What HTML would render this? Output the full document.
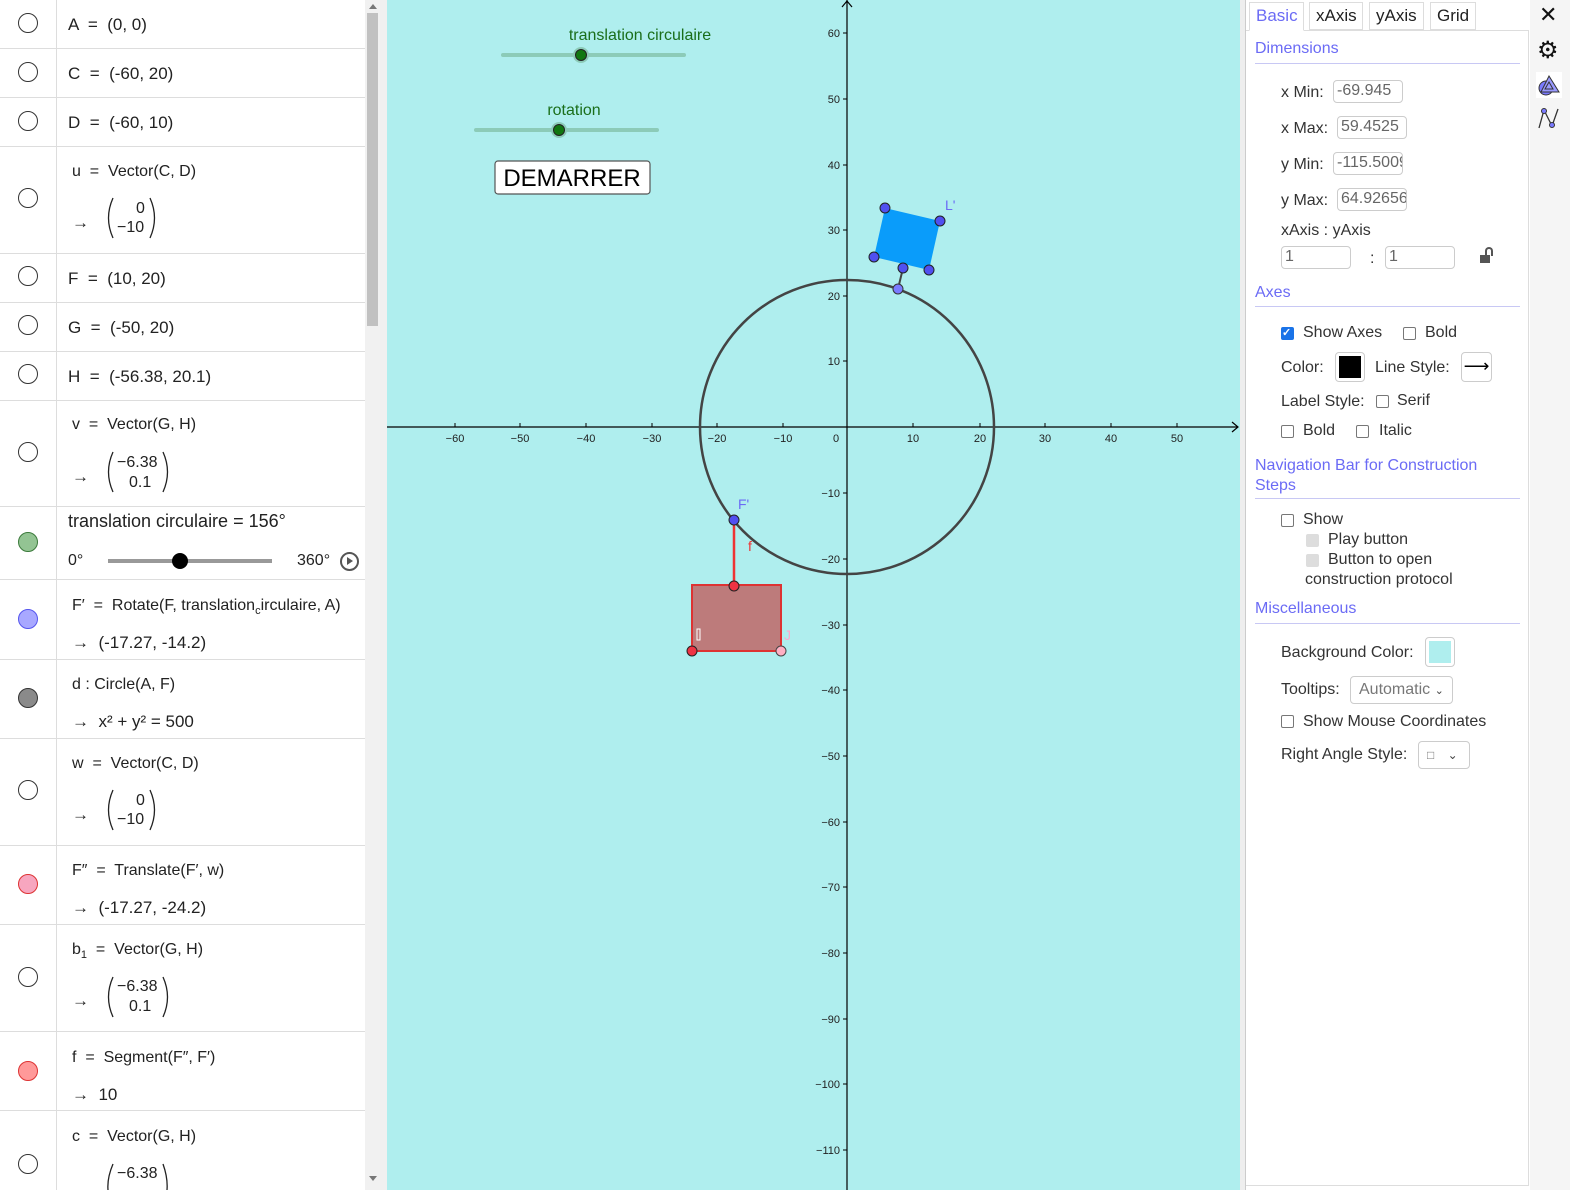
<!DOCTYPE html>
<html><head><meta charset="utf-8"><style>
*{margin:0;padding:0;box-sizing:border-box}
body{width:1570px;height:1190px;overflow:hidden;background:#fff;font-family:"Liberation Sans",sans-serif;position:relative}
.a{position:absolute;white-space:nowrap}
.row{position:absolute;left:0;width:365px;border-bottom:1px solid #ddd}
.ic{position:absolute;left:18px;width:20px;height:20px;border-radius:50%;border:1.5px solid #333;background:#fff}
.t{position:absolute;font-size:17px;color:#222;white-space:nowrap;line-height:20px}
.rp{font-size:16px;color:#333}
.blue{color:#6b6bf5}
.inp{position:absolute;border:1px solid #ccc;border-radius:4px;height:23px;font-size:16px;color:#666;padding:1px 3px;overflow:hidden;background:#fff;white-space:nowrap}
.cb{position:absolute;width:13px;height:13px;border:1px solid #777;border-radius:2px;background:#fff}
.hr{position:absolute;left:1255px;width:265px;height:1px;background:#c8c8f4}
</style></head><body>

<!-- left panel -->
<div class="a" style="left:0;top:0;width:365px;height:1190px;background:#fff"></div>
<div class="a" style="left:56px;top:0;width:1px;height:1190px;background:#ddd"></div>
<div class="row" style="top:0;height:49px"></div>
<div class="row" style="top:49px;height:49px"></div>
<div class="row" style="top:98px;height:49px"></div>
<div class="row" style="top:147px;height:107px"></div>
<div class="row" style="top:254px;height:49px"></div>
<div class="row" style="top:303px;height:49px"></div>
<div class="row" style="top:352px;height:49px"></div>
<div class="row" style="top:401px;height:106px"></div>
<div class="row" style="top:507px;height:73px"></div>
<div class="row" style="top:580px;height:80px"></div>
<div class="row" style="top:660px;height:79px"></div>
<div class="row" style="top:739px;height:107px"></div>
<div class="row" style="top:846px;height:79px"></div>
<div class="row" style="top:925px;height:107px"></div>
<div class="row" style="top:1032px;height:79px"></div>

<div class="ic" style="top:13px"></div>
<div class="ic" style="top:62px"></div>
<div class="ic" style="top:111px"></div>
<div class="ic" style="top:188px"></div>
<div class="ic" style="top:266px"></div>
<div class="ic" style="top:315px"></div>
<div class="ic" style="top:364px"></div>
<div class="ic" style="top:442px"></div>
<div class="ic" style="top:532px;background:#93c493;border-color:#3b7a3b"></div>
<div class="ic" style="top:609px;background:#a8a8ff;border-color:#5555ee"></div>
<div class="ic" style="top:688px;background:#8a8a8a;border-color:#333"></div>
<div class="ic" style="top:780px"></div>
<div class="ic" style="top:874px;background:#f7a6bf;border-color:#d33"></div>
<div class="ic" style="top:967px"></div>
<div class="ic" style="top:1061px;background:#f99;border-color:#d33"></div>
<div class="ic" style="top:1154px"></div>

<div class="t" style="left:68px;top:15px">A &nbsp;=&nbsp; (0, 0)</div>
<div class="t" style="left:68px;top:64px">C &nbsp;=&nbsp; (-60, 20)</div>
<div class="t" style="left:68px;top:113px">D &nbsp;=&nbsp; (-60, 10)</div>
<div class="t" style="left:72px;top:162px;font-size:16px">u &nbsp;=&nbsp; Vector(C, D)</div>
<div class="t" style="left:72px;top:213px">→</div>
<div class="t" style="left:136px;top:199px;font-size:16px">0</div>
<div class="t" style="left:117px;top:218px;font-size:16px">−10</div>
<div class="t" style="left:68px;top:269px">F &nbsp;=&nbsp; (10, 20)</div>
<div class="t" style="left:68px;top:318px">G &nbsp;=&nbsp; (-50, 20)</div>
<div class="t" style="left:68px;top:367px">H &nbsp;=&nbsp; (-56.38, 20.1)</div>
<div class="t" style="left:72px;top:415px;font-size:16px">v &nbsp;=&nbsp; Vector(G, H)</div>
<div class="t" style="left:72px;top:467px">→</div>
<div class="t" style="left:117px;top:453px;font-size:16px">−6.38</div>
<div class="t" style="left:129px;top:473px;font-size:16px">0.1</div>
<div class="t" style="left:68px;top:511px;font-size:18px">translation circulaire = 156°</div>
<div class="t" style="left:68px;top:551px;font-size:16px">0°</div>
<div class="a" style="left:108px;top:559px;width:164px;height:4px;background:#999"></div>
<div class="a" style="left:172px;top:553px;width:16px;height:16px;border-radius:50%;background:#000"></div>
<div class="t" style="left:297px;top:551px;font-size:16px">360°</div>
<div class="a" style="left:340px;top:552px;width:19px;height:19px;border-radius:50%;border:2px solid #555"></div>
<div class="a" style="left:347px;top:557px;width:0;height:0;border-left:6px solid #555;border-top:4.5px solid transparent;border-bottom:4.5px solid transparent"></div>
<div class="t" style="left:72px;top:596px;font-size:16px">F′ &nbsp;=&nbsp; Rotate(F, translation<sub style="font-size:11px">c</sub>irculaire, A)</div>
<div class="t" style="left:72px;top:633px">→ &nbsp;(-17.27, -14.2)</div>
<div class="t" style="left:72px;top:675px;font-size:16px">d : Circle(A, F)</div>
<div class="t" style="left:72px;top:712px">→ &nbsp;x² + y² = 500</div>
<div class="t" style="left:72px;top:754px;font-size:16px">w &nbsp;=&nbsp; Vector(C, D)</div>
<div class="t" style="left:72px;top:805px">→</div>
<div class="t" style="left:136px;top:791px;font-size:16px">0</div>
<div class="t" style="left:117px;top:810px;font-size:16px">−10</div>
<div class="t" style="left:72px;top:861px;font-size:16px">F″ &nbsp;=&nbsp; Translate(F′, w)</div>
<div class="t" style="left:72px;top:898px">→ &nbsp;(-17.27, -24.2)</div>
<div class="t" style="left:72px;top:940px;font-size:16px">b<sub style="font-size:11px">1</sub> &nbsp;=&nbsp; Vector(G, H)</div>
<div class="t" style="left:72px;top:991px">→</div>
<div class="t" style="left:117px;top:977px;font-size:16px">−6.38</div>
<div class="t" style="left:129px;top:997px;font-size:16px">0.1</div>
<div class="t" style="left:72px;top:1048px;font-size:16px">f &nbsp;=&nbsp; Segment(F″, F′)</div>
<div class="t" style="left:72px;top:1085px">→ &nbsp;10</div>
<div class="t" style="left:72px;top:1127px;font-size:16px">c &nbsp;=&nbsp; Vector(G, H)</div>
<div class="t" style="left:117px;top:1164px;font-size:16px">−6.38</div>

<svg class="a" style="left:0;top:0" width="365" height="1190">
<g fill="none" stroke="#222" stroke-width="1.3">
<path d="M113 198 Q104 218 113 238"/><path d="M150 198 Q159 218 150 238"/>
<path d="M113 452 Q104 472 113 492"/><path d="M163 452 Q172 472 163 492"/>
<path d="M113 790 Q104 810 113 830"/><path d="M150 790 Q159 810 150 830"/>
<path d="M113 977 Q104 997 113 1017"/><path d="M163 977 Q172 997 163 1017"/>
<path d="M113 1164 Q107 1178 108 1190"/><path d="M163 1164 Q168 1178 167 1190"/>
</g></svg>

<!-- scrollbar -->
<div class="a" style="left:365px;top:0;width:15px;height:1190px;background:#f1f1f1"></div>
<div class="a" style="left:367px;top:13px;width:11px;height:313px;background:#c1c1c1"></div>
<div class="a" style="left:369px;top:4px;border-left:4px solid transparent;border-right:4px solid transparent;border-bottom:5px solid #777"></div>
<div class="a" style="left:369px;top:1176px;border-left:4px solid transparent;border-right:4px solid transparent;border-top:5px solid #777"></div>
<div class="a" style="left:380px;top:0;width:7px;height:1190px;background:#f0f0f0"></div>

<!-- graphics -->
<svg class="a" style="left:387px;top:0" width="853" height="1190" font-family="Liberation Sans" font-size="11">
<rect width="853" height="1190" fill="#afeeee"/>
<g transform="translate(-387,0)">
<line x1="387" y1="427" x2="1238" y2="427" stroke="#000" stroke-width="1.2"/>
<path d="M1232 422 L1238 427 L1232 432" fill="none" stroke="#000" stroke-width="1.2"/>
<line x1="847" y1="0" x2="847" y2="1190" stroke="#000" stroke-width="1.2"/>
<path d="M842 7 L847 1 L852 7" fill="none" stroke="#000" stroke-width="1.2"/>
<g stroke="#000">
<path d="M455 427v-4M520 427v-4M586 427v-4M652 427v-4M717 427v-4M783 427v-4M913 427v-4M980 427v-4M1045 427v-4M1111 427v-4M1177 427v-4"/>
<path d="M847 33h-4M847 99h-4M847 165h-4M847 230h-4M847 296h-4M847 361h-4M847 493h-4M847 559h-4M847 625h-4M847 690h-4M847 756h-4M847 822h-4M847 887h-4M847 953h-4M847 1019h-4M847 1084h-4M847 1150h-4"/>
</g>
<g fill="#222" text-anchor="middle">
<text x="455" y="442">−60</text><text x="520" y="442">−50</text><text x="586" y="442">−40</text><text x="652" y="442">−30</text><text x="717" y="442">−20</text><text x="783" y="442">−10</text><text x="836" y="442">0</text><text x="913" y="442">10</text><text x="980" y="442">20</text><text x="1045" y="442">30</text><text x="1111" y="442">40</text><text x="1177" y="442">50</text>
</g>
<g fill="#222" text-anchor="end">
<text x="840" y="37">60</text><text x="840" y="103">50</text><text x="840" y="169">40</text><text x="840" y="234">30</text><text x="840" y="300">20</text><text x="840" y="365">10</text><text x="840" y="497">−10</text><text x="840" y="563">−20</text><text x="840" y="629">−30</text><text x="840" y="694">−40</text><text x="840" y="760">−50</text><text x="840" y="826">−60</text><text x="840" y="891">−70</text><text x="840" y="957">−80</text><text x="840" y="1023">−90</text><text x="840" y="1088">−100</text><text x="840" y="1154">−110</text>
</g>
<circle cx="847" cy="427" r="147" fill="none" stroke="#444" stroke-width="2.5"/>
<polygon points="885,208 940,221 929,270 874,257" fill="#0a9cfa"/>
<line x1="903" y1="268" x2="898" y2="289" stroke="#444" stroke-width="2"/>
<g fill="#5050f0" stroke="#222" stroke-width="1">
<circle cx="885" cy="208" r="5"/><circle cx="940" cy="221" r="5"/><circle cx="929" cy="270" r="5"/><circle cx="874" cy="257" r="5"/><circle cx="903" cy="268" r="5"/>
</g>
<circle cx="898" cy="289" r="5" fill="#7a7aff" stroke="#333"/>
<text x="945" y="210" fill="#6b6bf5" font-size="14">L'</text>
<rect x="692" y="585" width="89" height="66" fill="#bd7b7b" stroke="#d33" stroke-width="2"/>
<line x1="734" y1="520" x2="734" y2="586" stroke="#e33" stroke-width="2.5"/>
<circle cx="734" cy="586" r="5" fill="#ee3344" stroke="#222"/>
<circle cx="692" cy="651" r="5" fill="#ee3344" stroke="#222"/>
<circle cx="781" cy="651" r="5" fill="#ffb0c4" stroke="#444"/>
<circle cx="734" cy="520" r="5" fill="#5050f0" stroke="#222"/>
<text x="738" y="509" fill="#6b6bf5" font-size="14">F'</text>
<text x="748" y="551" fill="#e33" font-size="14">f</text>
<text x="784" y="640" fill="#ffaacc" font-size="14">J</text>
<rect x="697" y="629" width="3" height="11" fill="none" stroke="#fff" stroke-width="1"/>
<!-- sliders -->
<text x="640" y="40" fill="#1a6e1a" font-size="16" text-anchor="middle">translation circulaire</text>
<line x1="503" y1="55" x2="684" y2="55" stroke="#8ccbb8" stroke-width="4" stroke-linecap="round"/>
<circle cx="581" cy="55" r="8" fill="#8ccbb8"/><circle cx="581" cy="55" r="5.5" fill="#117711" stroke="#222"/>
<text x="574" y="115" fill="#1a6e1a" font-size="16" text-anchor="middle">rotation</text>
<line x1="476" y1="130" x2="657" y2="130" stroke="#8ccbb8" stroke-width="4" stroke-linecap="round"/>
<circle cx="559" cy="130" r="8" fill="#8ccbb8"/><circle cx="559" cy="130" r="5.5" fill="#117711" stroke="#222"/>
<rect x="495" y="161" width="155" height="33" rx="3" fill="#fff" stroke="#555" stroke-width="1.2"/>
<text x="572" y="186" font-size="24" text-anchor="middle" fill="#000">DEMARRER</text>
</g>
</svg>

<!-- right panel -->
<div class="a" style="left:1240px;top:0;width:290px;height:1190px;background:#fff"></div>
<div class="a" style="left:1240px;top:0;width:6px;height:1190px;background:#eee;border-right:1px solid #ccc"></div>
<div class="a" style="left:1246px;top:30px;width:283px;height:1156px;border:1px solid #ddd;border-left:none"></div>
<div class="a" style="left:1249px;top:2px;width:55px;height:29px;border:1px solid #ddd;border-bottom:1px solid #fff;background:#fff"></div>
<div class="a rp blue" style="left:1256px;top:6px;font-size:17px">Basic</div>
<div class="a" style="left:1309px;top:2px;width:54px;height:28px;border:1px solid #ddd"></div>
<div class="a rp" style="left:1316px;top:6px;font-size:17px;color:#222">xAxis</div>
<div class="a" style="left:1369px;top:2px;width:55px;height:28px;border:1px solid #ddd"></div>
<div class="a rp" style="left:1376px;top:6px;font-size:17px;color:#222">yAxis</div>
<div class="a" style="left:1430px;top:2px;width:46px;height:28px;border:1px solid #ddd"></div>
<div class="a rp" style="left:1437px;top:6px;font-size:17px;color:#222">Grid</div>

<div class="a rp blue" style="left:1255px;top:40px">Dimensions</div>
<div class="hr" style="top:63px"></div>
<div class="a rp" style="left:1281px;top:84px">x Min:</div><div class="inp" style="left:1333px;top:80px;width:70px">-69.945</div>
<div class="a rp" style="left:1281px;top:120px">x Max:</div><div class="inp" style="left:1337px;top:116px;width:70px">59.4525</div>
<div class="a rp" style="left:1281px;top:156px">y Min:</div><div class="inp" style="left:1333px;top:152px;width:70px">-115.5009</div>
<div class="a rp" style="left:1281px;top:192px">y Max:</div><div class="inp" style="left:1337px;top:188px;width:70px">64.92656</div>
<div class="a rp" style="left:1281px;top:222px">xAxis : yAxis</div>
<div class="inp" style="left:1281px;top:246px;width:70px">1</div>
<div class="a rp" style="left:1370px;top:250px">:</div>
<div class="inp" style="left:1385px;top:246px;width:70px">1</div>
<div class="a" style="left:1480px;top:255px;width:10px;height:8px;background:#555"></div>
<div class="a" style="left:1485px;top:247px;width:8px;height:9px;border:2px solid #555;border-bottom:none;border-radius:4px 4px 0 0"></div>

<div class="a rp blue" style="left:1255px;top:284px">Axes</div>
<div class="hr" style="top:306px"></div>
<div class="cb" style="left:1281px;top:327px;background:#1a73e8;border-color:#1a73e8"></div>
<div class="a" style="left:1282px;top:326px;color:#fff;font-size:11px;font-weight:bold">✓</div>
<div class="a rp" style="left:1303px;top:324px">Show Axes</div>
<div class="cb" style="left:1403px;top:327px"></div><div class="a rp" style="left:1425px;top:324px">Bold</div>
<div class="a rp" style="left:1281px;top:359px">Color:</div>
<div class="a" style="left:1335px;top:352px;width:30px;height:30px;border:1px solid #ccc;border-radius:4px;background:#fff"><div style="margin:3px;width:22px;height:22px;background:#000"></div></div>
<div class="a rp" style="left:1375px;top:359px">Line Style:</div>
<div class="a" style="left:1461px;top:352px;width:31px;height:30px;border:1px solid #ccc;border-radius:4px;font-size:18px;text-align:center;line-height:26px">⟶</div>
<div class="a rp" style="left:1281px;top:393px">Label Style:</div>
<div class="cb" style="left:1376px;top:395px"></div><div class="a rp" style="left:1397px;top:392px">Serif</div>
<div class="cb" style="left:1281px;top:425px"></div><div class="a rp" style="left:1303px;top:422px">Bold</div>
<div class="cb" style="left:1356px;top:425px"></div><div class="a rp" style="left:1379px;top:422px">Italic</div>

<div class="a rp blue" style="left:1255px;top:456px;line-height:20px">Navigation Bar for Construction<br>Steps</div>
<div class="hr" style="top:498px"></div>
<div class="cb" style="left:1281px;top:514px"></div><div class="a rp" style="left:1303px;top:511px">Show</div>
<div class="cb" style="left:1306px;top:534px;background:#ddd;border-color:#ddd"></div><div class="a rp" style="left:1328px;top:531px">Play button</div>
<div class="cb" style="left:1306px;top:554px;background:#ddd;border-color:#ddd"></div><div class="a rp" style="left:1328px;top:551px">Button to open</div>
<div class="a rp" style="left:1305px;top:571px">construction protocol</div>

<div class="a rp blue" style="left:1255px;top:600px">Miscellaneous</div>
<div class="hr" style="top:623px"></div>
<div class="a rp" style="left:1281px;top:644px">Background Color:</div>
<div class="a" style="left:1425px;top:637px;width:30px;height:30px;border:1px solid #ccc;border-radius:4px"><div style="margin:3px;width:22px;height:22px;background:#afeeee"></div></div>
<div class="a rp" style="left:1281px;top:681px">Tooltips:</div>
<div class="a" style="left:1350px;top:676px;width:103px;height:28px;border:1px solid #ccc;border-radius:4px;font-size:16px;color:#777;padding:4px 8px">Automatic <span style="font-size:11px;color:#444">⌄</span></div>
<div class="cb" style="left:1281px;top:715px"></div><div class="a rp" style="left:1303px;top:713px">Show Mouse Coordinates</div>
<div class="a rp" style="left:1281px;top:746px">Right Angle Style:</div>
<div class="a" style="left:1418px;top:741px;width:52px;height:28px;border:1px solid #ccc;border-radius:4px;font-size:12px;color:#777;padding:6px 8px">□ &nbsp;&nbsp; <span style="color:#444">⌄</span></div>

<!-- far right toolbar -->
<div class="a" style="left:1530px;top:0;width:40px;height:1190px;background:#f5f5f5"></div>
<div class="a" style="left:1539px;top:2px;font-size:22px;color:#111">✕</div>
<div class="a" style="left:1537px;top:36px;font-size:24px;color:#111">⚙</div>
<svg class="a" style="left:1536px;top:72px" width="26" height="26"><rect width="26" height="26" fill="#fff"/><circle cx="10" cy="16" r="7" fill="#7a7aff" stroke="#333"/><path d="M13 4 L23 20 L5 20 Z" fill="#9a9aff" stroke="#333"/><path d="M13 10 L17 17 L9 17Z" fill="none" stroke="#333"/></svg>
<svg class="a" style="left:1537px;top:106px" width="24" height="24"><path d="M2 22 L7 4 L15 20 L21 3" fill="none" stroke="#333" stroke-width="1.3"/><circle cx="7" cy="5" r="2.5" fill="#7a7aff" stroke="#333"/><circle cx="15" cy="19" r="2.5" fill="#7a7aff" stroke="#333"/></svg>

</body></html>
